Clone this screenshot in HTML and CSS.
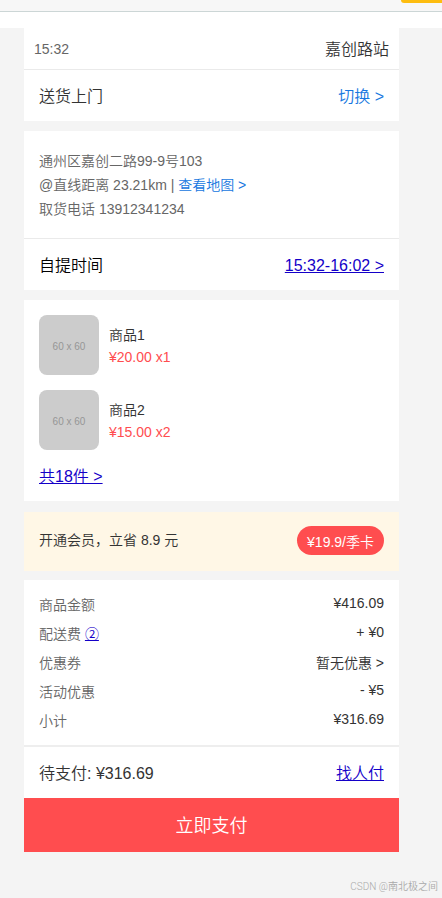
FILE: index.html
```html
<!DOCTYPE html>
<html lang="zh-CN">
<head>
<meta charset="utf-8">
<meta name="viewport" content="width=device-width, initial-scale=1">
<title>确认订单</title>
<link rel="stylesheet" href="styles.css">
</head>
<body>
<div class="topbar"><span class="topbar-tab"></span></div>
<main class="page">
  <section class="card">
    <header class="station">
      <span class="clock">15:32</span>
      <span>嘉创路站</span>
    </header>
    <div class="row">
      <span>送货上门</span>
      <a class="switch" href="#">切换 &gt;</a>
    </div>
  </section>

  <section class="card">
    <div class="address">
      <p>通州区嘉创二路99-9号103</p>
      <p>@直线距离 23.21km | <a class="map" href="#">查看地图 &gt;</a></p>
      <p>取货电话 13912341234</p>
    </div>
    <div class="row pickup">
      <span>自提时间</span>
      <a href="#">15:32-16:02 &gt;</a>
    </div>
  </section>

  <section class="card goods">
    <div class="item">
      <div class="thumb">60 x 60</div>
      <div class="info">
        <p>商品1</p>
        <p class="price">¥20.00 x1</p>
      </div>
    </div>
    <div class="item">
      <div class="thumb">60 x 60</div>
      <div class="info">
        <p>商品2</p>
        <p class="price">¥15.00 x2</p>
      </div>
    </div>
    <a class="all" href="#">共18件 &gt;</a>
  </section>

  <section class="member">
    <span>开通会员，立省 8.9 元</span>
    <button class="pill" type="button">¥19.9/季卡</button>
  </section>

  <section class="card">
    <dl class="fees">
      <div class="fee"><dt>商品金额</dt><dd>¥416.09</dd></div>
      <div class="fee"><dt>配送费 <a href="#">②</a></dt><dd>+ ¥0</dd></div>
      <div class="fee"><dt>优惠券</dt><dd class="coupon">暂无优惠 &gt;</dd></div>
      <div class="fee"><dt>活动优惠</dt><dd>- ¥5</dd></div>
      <div class="fee"><dt>小计</dt><dd>¥316.69</dd></div>
    </dl>
    <div class="row">
      <span>待支付: ¥316.69</span>
      <a href="#">找人付</a>
    </div>
    <button class="pay" type="button">立即支付</button>
  </section>
</main>
<footer class="credit">CSDN @南北极之间</footer>
</body>
</html>
```
FILE: styles.css
```css
* {
  box-sizing: border-box;
}

body,
p,
dl,
dd {
  margin: 0;
}

body {
  background: #f4f4f4;
  color: #333;
  font: 350 16px/21px "Liberation Sans", "Noto Sans CJK SC", sans-serif;
}

a {
  color: #1400c8;
}

button {
  border: 0;
  color: #fff;
  font-family: inherit;
  font-weight: inherit;
  cursor: pointer;
}

.topbar {
  display: flex;
  justify-content: flex-end;
  height: 28px;
  border-bottom: 16px solid #fff;
  background: linear-gradient(#f7f7f7 11px, #ccd6d6 11px);
}

.topbar-tab {
  width: 41px;
  height: 3px;
  border-bottom-left-radius: 3px;
  background: #fdbd10;
}

.page {
  padding: 0 43px 0 24px;
}

.card {
  margin-bottom: 10px;
  background: #fff;
}

.station {
  display: flex;
  justify-content: space-between;
  align-items: center;
  padding: 11px 10px 9px;
  border-bottom: 1px solid #eaeaea;
}

.clock {
  color: #666;
  font-size: 14px;
}

.row {
  display: flex;
  justify-content: space-between;
  align-items: center;
  padding: 16px 15px 14px;
}

.pickup {
  color: #000;
}

.switch,
.map {
  color: #1677e0;
  text-decoration: none;
}

.address {
  padding: 18px 15px 17px;
  border-bottom: 1px solid #eaeaea;
  color: #666;
  font-size: 14px;
  line-height: 24px;
}

.goods {
  display: flex;
  flex-direction: column;
  align-items: flex-start;
  gap: 15px;
  padding: 15px 15px 13px;
}

.item {
  display: flex;
  align-items: center;
  gap: 10px;
}

.thumb {
  display: flex;
  align-items: center;
  justify-content: center;
  width: 60px;
  height: 60px;
  padding-top: 2px;
  border-radius: 8px;
  background: #ccc;
  color: #969696;
  font-size: 10px;
}

.info {
  padding-top: 2px;
  font-size: 14px;
  line-height: 22px;
}

.price {
  color: #ff4d4f;
}

.all {
  line-height: 23px;
}

.member {
  display: flex;
  justify-content: space-between;
  align-items: center;
  margin: 11px 0 9px;
  padding: 14px 15px 16px;
  background: #fff7e6;
  font-size: 14px;
}

.pill {
  height: 29px;
  padding: 0 10px;
  border-radius: 15px;
  background: #ff4d4f;
  font-size: 14px;
}

.fees {
  display: flex;
  flex-direction: column;
  gap: 10px;
  padding: 16px 15px 14px;
  border-bottom: 2px solid #eee;
  font-size: 14px;
  line-height: 19px;
}

.fee {
  display: flex;
  justify-content: space-between;
  align-items: flex-start;
}

.fee dt {
  color: #666;
}

.fee dd {
  line-height: 15px;
}

.fee .coupon {
  line-height: 19px;
}

.pay {
  display: block;
  width: 100%;
  padding: 16px 15px 14px;
  background: #ff4d4f;
  font-size: 18px;
  line-height: 24px;
}

.credit {
  padding: 19px 4px 5px;
  color: #aaa;
  font-family: Roboto, "Noto Sans CJK SC", sans-serif;
  font-size: 10px;
  line-height: 12px;
  text-align: right;
}
```
